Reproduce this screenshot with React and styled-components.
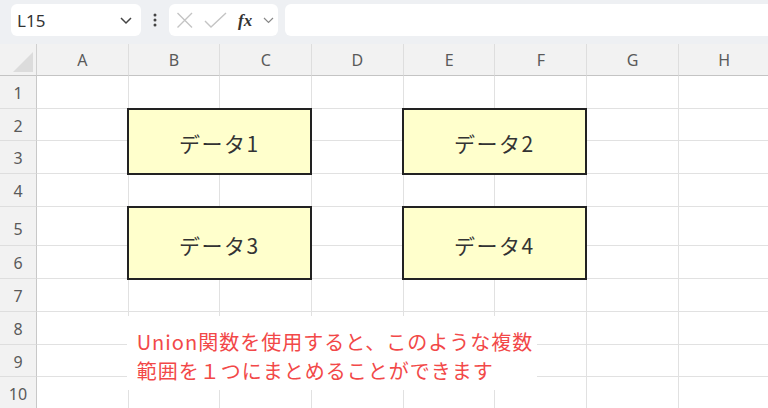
import React from "react";
import styled, { createGlobalStyle } from "styled-components";

const Global = createGlobalStyle`
  html, body { margin: 0; padding: 0; background: #fff; }
  body { font-family: "Noto Sans", "Noto Sans CJK JP", sans-serif; }
  #root { width: 768px; height: 408px; overflow: hidden; }
`;

const Page = styled.div`
  width: 768px;
  height: 408px;
  overflow: hidden;
  display: flex;
  flex-direction: column;
  background: #fff;
`;

const Toolbar = styled.div`
  height: 44px;
  flex: none;
  background: #eef0f3;
  display: flex;
  align-items: flex-start;
  padding: 4px 0 0 11px;
  box-sizing: border-box;
`;

const Field = styled.div`
  height: 32px;
  width: ${(p) => p.$w};
  flex: none;
  background: #fff;
  border-radius: 6px;
  box-sizing: border-box;
  display: flex;
  align-items: center;
`;

const NameText = styled.span`
  font-family: "Noto Sans", sans-serif;
  font-size: 17px;
  color: #333;
  padding-left: 6px;
  flex: 1;
`;

const Dots = styled.div`
  width: 28px;
  flex: none;
  display: flex;
  justify-content: center;
  align-items: center;
  height: 32px;
`;

const Grid = styled.div`
  display: grid;
  grid-template-columns: 37px repeat(8, 91.7px);
  grid-template-rows: 32px 33px 32px 33px 33px 39px 33px 33px 33px 32px 33px;
`;

const Corner = styled.div`
  grid-row: 1;
  grid-column: 1;
  background: #f2f2f2;
  border-right: 1px solid #d0d0d0;
  border-bottom: 1px solid #c4c4c4;
  position: relative;
  &::after {
    content: "";
    position: absolute;
    right: 3px;
    bottom: 3px;
    width: 0;
    height: 0;
    border-left: 20px solid transparent;
    border-bottom: 20px solid #dcdcdc;
  }
`;

const ColHead = styled.div`
  grid-row: 1;
  background: #f2f2f2;
  border-right: 1px solid #dedede;
  border-bottom: 1px solid #c4c4c4;
  display: flex;
  align-items: center;
  justify-content: center;
  font-family: "Noto Sans", sans-serif;
  font-size: 16px;
  color: #5a5a5a;
  padding-top: 1px;
`;

const RowHead = styled.div`
  grid-column: 1;
  background: #f2f2f2;
  border-right: 1px solid #c8c8c8;
  border-bottom: 1px solid #dedede;
  display: flex;
  align-items: center;
  justify-content: center;
  font-family: "Noto Sans", sans-serif;
  font-size: 16px;
  color: #5a5a5a;
  padding-top: ${(p) => p.$pt || 0}px;
`;

const Cell = styled.div`
  border-right: 1px solid #e1e1e1;
  border-bottom: 1px solid #e1e1e1;
`;

const DataBox = styled.div`
  grid-column: ${(p) => p.$col};
  grid-row: ${(p) => p.$row};
  margin: -1px 0 -1px -2px;
  background: #ffffcc;
  border: 2px solid #222;
  z-index: 2;
  display: flex;
  align-items: center;
  justify-content: center;
  font-family: "Noto Sans CJK JP", "Noto Sans", sans-serif;
  font-size: 21px;
  letter-spacing: 1.5px;
  color: #333;
  padding-top: 3px;
`;

const Note = styled.div`
  grid-column: 3 / 8;
  grid-row: 9 / 12;
  align-self: start;
  margin: 4px 0 0 -2px;
  width: 410px;
  height: 74px;
  background: #fff;
  z-index: 2;
  box-sizing: border-box;
  padding: 11px 0 0 10px;
  font-family: "Noto Sans CJK JP", sans-serif;
  font-size: 20px;
  letter-spacing: 1px;
  line-height: 29px;
  color: #f24848;
  white-space: nowrap;
`;

const cols = ["A", "B", "C", "D", "E", "F", "G", "H"];
const rowPad = [2, 2, 2, 2, 6, 2, 2, 2, 2, 2];

export default function App() {
  const cells = [];
  for (let r = 0; r < 10; r++) {
    cells.push(
      <RowHead key={"r" + r} $pt={rowPad[r]} style={{ gridRow: r + 2 }}>
        {r + 1}
      </RowHead>
    );
    for (let c = 0; c < 8; c++) {
      cells.push(<Cell key={r + "-" + c} style={{ gridRow: r + 2, gridColumn: c + 2 }} />);
    }
  }
  return (
    <Page>
      <Global />
      <Toolbar>
        <Field $w="130px">
          <NameText>L15</NameText>
          <svg width="14" height="14" viewBox="0 0 14 14" style={{ marginRight: 8 }}>
            <path d="M2 5 L7 10 L12 5" stroke="#444" strokeWidth="1.5" fill="none" />
          </svg>
        </Field>
        <Dots>
          <svg width="4" height="14" viewBox="0 0 4 14">
            <circle cx="2" cy="2" r="1.5" fill="#444" />
            <circle cx="2" cy="7" r="1.5" fill="#444" />
            <circle cx="2" cy="12" r="1.5" fill="#444" />
          </svg>
        </Dots>
        <Field $w="109px">
          <svg width="109" height="32" viewBox="0 0 109 32">
            <path d="M8.5 9 L23 23.5 M23 9 L8.5 23.5" stroke="#c4c4c4" strokeWidth="1.4" fill="none" />
            <path d="M36 17 L42 23 L57 9" stroke="#c4c4c4" strokeWidth="1.4" fill="none" />
            <text x="69" y="22" fontFamily="'Liberation Serif', serif" fontStyle="italic" fontWeight="bold" fontSize="17" fill="#333">fx</text>
            <path d="M95 14 L99.5 18.5 L104 14" stroke="#888" strokeWidth="1.2" fill="none" />
          </svg>
        </Field>
        <Field $w="490px" style={{ marginLeft: 7 }} />
      </Toolbar>
      <Grid>
        <Corner />
        {cols.map((c, i) => (
          <ColHead key={c} style={{ gridColumn: i + 2 }}>
            {c}
          </ColHead>
        ))}
        {cells}
        <DataBox $col="3 / 5" $row="3 / 5">データ1</DataBox>
        <DataBox $col="6 / 8" $row="3 / 5">データ2</DataBox>
        <DataBox $col="3 / 5" $row="6 / 8">データ3</DataBox>
        <DataBox $col="6 / 8" $row="6 / 8">データ4</DataBox>
        <Note>
          Union関数を使用すると、このような複数
          <br />
          範囲を１つにまとめることができます
        </Note>
      </Grid>
    </Page>
  );
}
